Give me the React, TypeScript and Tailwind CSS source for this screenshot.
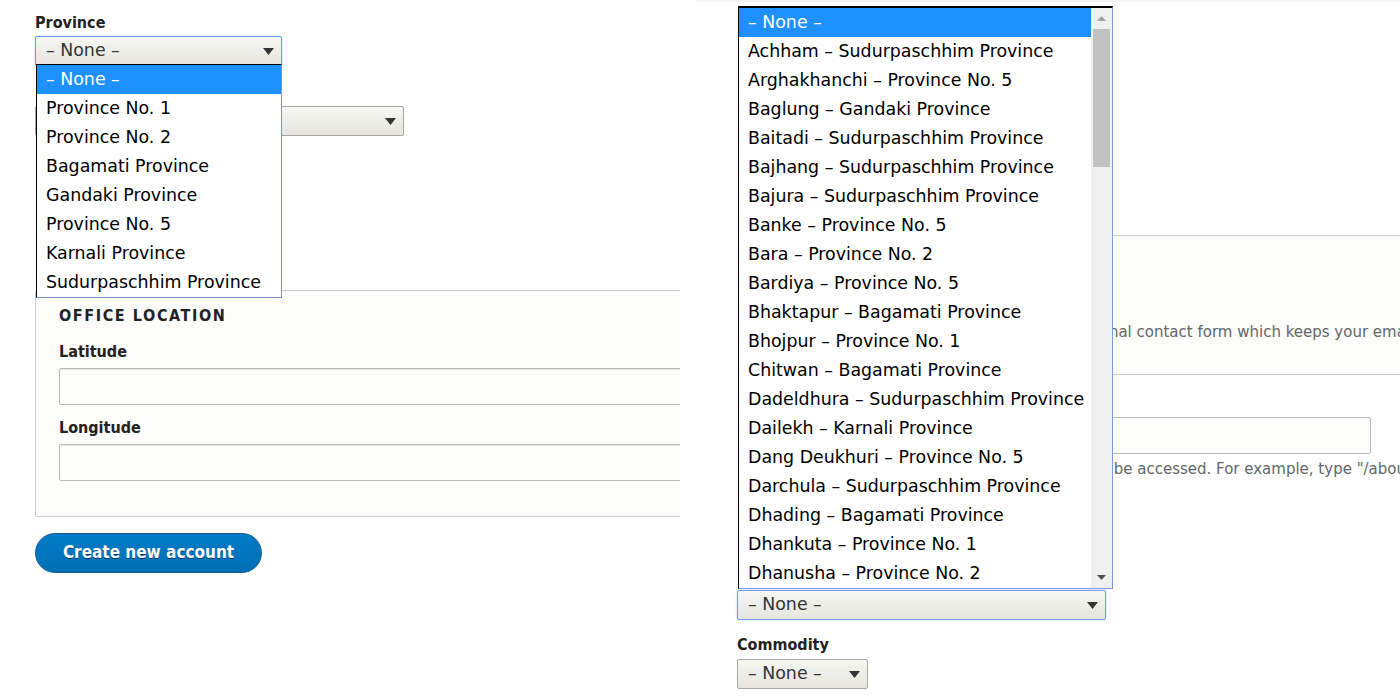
const provinces = [
  '– None –',
  'Province No. 1',
  'Province No. 2',
  'Bagamati Province',
  'Gandaki Province',
  'Province No. 5',
  'Karnali Province',
  'Sudurpaschhim Province',
];

const districts = [
  '– None –',
  'Achham – Sudurpaschhim Province',
  'Arghakhanchi – Province No. 5',
  'Baglung – Gandaki Province',
  'Baitadi – Sudurpaschhim Province',
  'Bajhang – Sudurpaschhim Province',
  'Bajura – Sudurpaschhim Province',
  'Banke – Province No. 5',
  'Bara – Province No. 2',
  'Bardiya – Province No. 5',
  'Bhaktapur – Bagamati Province',
  'Bhojpur – Province No. 1',
  'Chitwan – Bagamati Province',
  'Dadeldhura – Sudurpaschhim Province',
  'Dailekh – Karnali Province',
  'Dang Deukhuri – Province No. 5',
  'Darchula – Sudurpaschhim Province',
  'Dhading – Bagamati Province',
  'Dhankuta – Province No. 1',
  'Dhanusha – Province No. 2',
];

const bold = "font-['DejaVu_Sans_Condensed','DejaVu_Sans',sans-serif] font-bold";

function Arrow() {
  return (
    <svg width="11" height="7" viewBox="0 0 11 7" className="shrink-0">
      <path d="M0 0h11L5.5 7z" fill="#333" />
    </svg>
  );
}

function Select({ className, focused, value = '– None –' }: { className: string; focused?: boolean; value?: string }) {
  return (
    <div
      className={`flex h-[30px] items-center justify-between rounded-[2px] border bg-linear-to-b from-[#f6f6f3] to-[#e6e6de] pl-[10px] pr-[7px] text-[17.4px] text-[#333] ${
        focused ? 'border-[#6f9fe8] shadow-[0_0_2px_#a9c6f3]' : 'border-[#a6a6a6]'
      } ${className}`}
    >
      <span className="leading-none">{value}</span>
      <Arrow />
    </div>
  );
}

function Options({ items }: { items: string[] }) {
  return (
    <div className="min-w-0 flex-1">
      {items.map((item, i) => (
        <div
          key={item}
          className={`h-[29px] whitespace-nowrap pl-[9px] text-[17.4px] leading-[29px] ${
            i === 0 ? 'bg-[#1e90ff] text-white' : 'text-black'
          }`}
        >
          {item}
        </div>
      ))}
    </div>
  );
}

function Label({ children, className = '' }: { children: string; className?: string }) {
  return <div className={`text-[16px] leading-[20px] text-[#222] ${bold} ${className}`}>{children}</div>;
}

function LeftPanel() {
  return (
    <div className="relative h-[700px] w-[680px] shrink-0 overflow-hidden pl-[35px]">
      <Label className="pt-[13px]">Province</Label>
      <Select className="mt-[3px] w-[247px]" focused />
      {/* district select, its value sits under the open list */}
      <Select className="mt-[40px] w-[369px]" value="" />

      <div className="mt-[154px] w-[700px] rounded-[2px] border border-[#ccc] bg-[#fcfcfa] pb-[35px] pl-[23px] pt-[15px]">
        <div className={`text-[16px] uppercase leading-[20px] tracking-[0.1em] text-[#222] ${bold}`}>Office location</div>
        <Label className="mt-[16px]">Latitude</Label>
        <div className="mt-[6px] h-[37px] w-[680px] rounded-[2px] border border-[#b8b8b8] bg-[#fcfcfa] shadow-[inset_0_1px_1px_rgba(0,0,0,0.08)]" />
        <Label className="mt-[13px]">Longitude</Label>
        <div className="mt-[6px] h-[37px] w-[680px] rounded-[2px] border border-[#b8b8b8] bg-[#fcfcfa] shadow-[inset_0_1px_1px_rgba(0,0,0,0.08)]" />
      </div>

      <button
        type="button"
        className={`mt-[16px] h-[40px] w-[227px] rounded-full border border-[#1e5c90] bg-linear-to-b from-[#007bc6] to-[#0070b6] text-[17px] text-white [text-shadow:0_1px_0_rgba(0,0,0,0.5)] ${bold}`}
      >
        Create new account
      </button>

      <div className="absolute left-[36px] top-[64px] flex w-[246px] border border-b-[#7d93c6] border-l-black border-r-[#7d93c6] border-t-black bg-white">
        <Options items={provinces} />
      </div>
    </div>
  );
}

function RightPanel() {
  return (
    <div className="relative h-[700px] flex-1 overflow-hidden pl-[57px]">
      <div className="-ml-[41px] h-[2px] bg-[#f4f4f4]" />

      <div className="ml-[3px] mt-[233px] h-[140px] w-[700px] overflow-hidden border border-[#ccc] bg-[#fcfcfa] pl-[326px] pt-[86px]">
        <p className="whitespace-nowrap text-[15px] leading-[20px] text-[#666]">
          personal contact form which keeps your email address hidden.
        </p>
      </div>

      <div className="ml-[3px] mt-[42px] h-[37px] w-[631px] rounded-[2px] border border-[#b8b8b8] bg-[#fcfcfa]" />
      <p className="mt-[5px] whitespace-nowrap pl-[345px] text-[15px] leading-[20px] text-[#666]">
        can be accessed. For example, type "/about" when writing an about page.
      </p>

      <Select className="mt-[111px] w-[369px]" focused />
      <Label className="mt-[15px]">Commodity</Label>
      <Select className="mt-[4px] w-[131px]" />

      <div className="absolute left-[58px] top-[6px] flex h-[583px] w-[375px] border border-b-[#7a9be0] border-l-black border-r-[#7a9be0] border-t-2 border-t-black bg-white">
        <Options items={districts} />
        <div className="flex w-[21px] shrink-0 flex-col bg-[#f0f0f0]">
          <div className="flex h-[21px] items-center justify-center">
            <svg width="9" height="5" viewBox="0 0 9 5">
              <path d="M0 5L4.5 0L9 5z" fill="#a3a3a3" />
            </svg>
          </div>
          <div className="mx-[2px] h-[138px] bg-[#c1c1c1]" />
          <div className="flex-1" />
          <div className="flex h-[21px] items-center justify-center">
            <svg width="9" height="5" viewBox="0 0 9 5">
              <path d="M0 0h9L4.5 5z" fill="#505050" />
            </svg>
          </div>
        </div>
      </div>
    </div>
  );
}

export default function App() {
  return (
    <div className="flex h-[700px] w-[1400px] overflow-hidden bg-white font-['DejaVu_Sans',sans-serif]">
      <LeftPanel />
      <RightPanel />
    </div>
  );
}
